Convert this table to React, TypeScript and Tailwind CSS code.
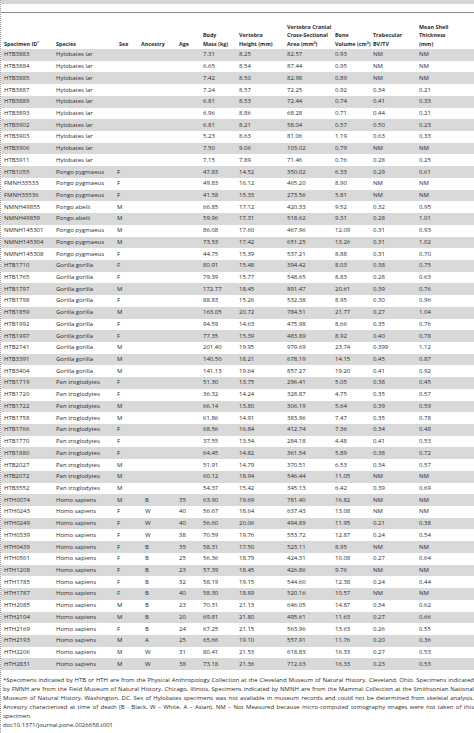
import React from 'react';

type Row = [string, string, string, string, string, string, string, string, string, string, string];

const rows: Row[] = [
  ['HTB3883', 'Hylobates lar', '', '', '', '7.31', '8.25', '82.57', '0.93', 'NM', 'NM'],
  ['HTB3884', 'Hylobates lar', '', '', '', '6.65', '8.54', '87.44', '0.95', 'NM', 'NM'],
  ['HTB3885', 'Hylobates lar', '', '', '', '7.42', '8.50', '82.98', '0.89', 'NM', 'NM'],
  ['HTB3887', 'Hylobates lar', '', '', '', '7.24', '8.57', '72.25', '0.92', '0.34', '0.21'],
  ['HTB3889', 'Hylobates lar', '', '', '', '6.81', '8.53', '72.44', '0.74', '0.41', '0.33'],
  ['HTB3893', 'Hylobates lar', '', '', '', '6.96', '8.86', '68.28', '0.71', '0.44', '0.21'],
  ['HTB3902', 'Hylobates lar', '', '', '', '6.81', '8.21', '58.04', '0.57', '0.50', '0.23'],
  ['HTB3903', 'Hylobates lar', '', '', '', '5.23', '8.63', '81.06', '1.19', '0.63', '0.33'],
  ['HTB3906', 'Hylobates lar', '', '', '', '7.50', '9.06', '103.02', '0.79', 'NM', 'NM'],
  ['HTB3911', 'Hylobates lar', '', '', '', '7.15', '7.89', '71.46', '0.76', '0.28', '0.25'],
  ['HTB1055', 'Pongo pygmaeus', 'F', '', '', '47.83', '14.52', '350.02', '6.33', '0.29', '0.61'],
  ['FMNH33533', 'Pongo pygmaeus', 'F', '', '', '49.83', '16.12', '465.20', '8.90', 'NM', 'NM'],
  ['FMNH33536', 'Pongo pygmaeus', 'F', '', '', '41.58', '15.33', '273.56', '5.81', 'NM', 'NM'],
  ['NMNH49855', 'Pongo abelii', 'M', '', '', '66.85', '17.12', '420.33', '9.52', '0.32', '0.95'],
  ['NMNH49859', 'Pongo abelii', 'M', '', '', '59.96', '17.31', '518.62', '9.31', '0.28', '1.01'],
  ['NMNH145301', 'Pongo pygmaeus', 'M', '', '', '86.08', '17.60', '467.96', '12.09', '0.31', '0.93'],
  ['NMNH145304', 'Pongo pygmaeus', 'M', '', '', '73.53', '17.42', '651.25', '13.26', '0.31', '1.02'],
  ['NMNH145308', 'Pongo pygmaeus', 'F', '', '', '44.75', '15.39', '537.21', '8.88', '0.31', '0.70'],
  ['HTB1710', 'Gorilla gorilla', 'F', '', '', '80.91', '15.48', '394.42', '8.03', '0.38', '0.75'],
  ['HTB1765', 'Gorilla gorilla', 'F', '', '', '79.39', '15.77', '548.65', '8.83', '0.28', '0.63'],
  ['HTB1797', 'Gorilla gorilla', 'M', '', '', '172.77', '18.45', '891.47', '20.61', '0.39', '0.76'],
  ['HTB1798', 'Gorilla gorilla', 'F', '', '', '88.83', '15.26', '532.38', '8.95', '0.30', '0.96'],
  ['HTB1859', 'Gorilla gorilla', 'M', '', '', '163.05', '20.72', '784.51', '21.77', '0.27', '1.04'],
  ['HTB1992', 'Gorilla gorilla', 'F', '', '', '94.59', '14.63', '475.98', '8.66', '0.35', '0.76'],
  ['HTB1997', 'Gorilla gorilla', 'F', '', '', '77.35', '15.39', '483.89', '8.92', '0.40', '0.78'],
  ['HTB2741', 'Gorilla gorilla', 'M', '', '', '201.40', '19.95', '979.69', '23.74', '0.399', '1.12'],
  ['HTB3391', 'Gorilla gorilla', 'M', '', '', '140.50', '18.21', '678.19', '14.15', '0.45', '0.87'],
  ['HTB3404', 'Gorilla gorilla', 'M', '', '', '141.13', '19.64', '857.27', '19.20', '0.41', '0.92'],
  ['HTB1719', 'Pan troglodytes', 'F', '', '', '51.30', '13.75', '296.41', '5.05', '0.38', '0.45'],
  ['HTB1720', 'Pan troglodytes', 'F', '', '', '36.32', '14.24', '328.87', '4.75', '0.35', '0.57'],
  ['HTB1722', 'Pan troglodytes', 'M', '', '', '66.14', '13.80', '306.19', '5.64', '0.39', '0.59'],
  ['HTB1758', 'Pan troglodytes', 'M', '', '', '61.86', '14.91', '383.96', '7.47', '0.35', '0.78'],
  ['HTB1766', 'Pan troglodytes', 'F', '', '', '68.56', '16.84', '412.74', '7.36', '0.34', '0.48'],
  ['HTB1770', 'Pan troglodytes', 'F', '', '', '37.55', '13.54', '284.18', '4.48', '0.41', '0.53'],
  ['HTB1880', 'Pan troglodytes', 'F', '', '', '64.45', '14.82', '361.54', '5.89', '0.38', '0.72'],
  ['HTB2027', 'Pan troglodytes', 'M', '', '', '51.91', '14.79', '370.51', '6.53', '0.34', '0.57'],
  ['HTB2072', 'Pan troglodytes', 'M', '', '', '60.12', '18.94', '546.44', '11.05', 'NM', 'NM'],
  ['HTB3552', 'Pan troglodytes', 'M', '', '', '54.37', '15.42', '345.13', '6.42', '0.39', '0.69'],
  ['HTH0074', 'Homo sapiens', 'M', 'B', '35', '63.90', '19.69', '781.40', '16.82', 'NM', 'NM'],
  ['HTH0243', 'Homo sapiens', 'F', 'W', '40', '56.67', '18.64', '637.43', '13.08', 'NM', 'NM'],
  ['HTH0249', 'Homo sapiens', 'F', 'W', '40', '56.60', '20.06', '494.89', '11.95', '0.21', '0.38'],
  ['HTH0339', 'Homo sapiens', 'F', 'W', '38', '70.59', '19.76', '553.72', '12.87', '0.24', '0.54'],
  ['HTH0439', 'Homo sapiens', 'F', 'B', '35', '58.31', '17.50', '523.11', '8.95', 'NM', 'NM'],
  ['HTH0561', 'Homo sapiens', 'F', 'B', '25', '56.36', '18.79', '424.31', '10.08', '0.27', '0.64'],
  ['HTH1208', 'Homo sapiens', 'F', 'B', '23', '57.39', '18.45', '426.86', '9.76', 'NM', 'NM'],
  ['HTH1785', 'Homo sapiens', 'F', 'B', '32', '58.19', '19.15', '544.60', '12.38', '0.24', '0.44'],
  ['HTH1787', 'Homo sapiens', 'F', 'B', '40', '58.30', '18.89', '520.16', '10.57', 'NM', 'NM'],
  ['HTH2085', 'Homo sapiens', 'M', 'B', '23', '70.31', '21.13', '646.05', '14.87', '0.34', '0.62'],
  ['HTH2104', 'Homo sapiens', 'M', 'B', '20', '69.81', '21.80', '495.61', '11.63', '0.27', '0.66'],
  ['HTH2169', 'Homo sapiens', 'F', 'B', '24', '67.25', '21.15', '563.96', '13.63', '0.26', '0.55'],
  ['HTH2193', 'Homo sapiens', 'M', 'A', '25', '65.66', '19.10', '557.91', '11.76', '0.20', '0.36'],
  ['HTH2206', 'Homo sapiens', 'M', 'W', '31', '80.41', '21.53', '618.83', '16.33', '0.27', '0.53'],
  ['HTH2831', 'Homo sapiens', 'M', 'W', '38', '73.18', '21.36', '712.03', '16.33', '0.23', '0.53'],
];

// column template shared by header and body
const cols = 'grid grid-cols-[52px_61px_24px_38px_24px_36px_48px_48px_38px_46px_1fr]';

export default function App() {
  return (
    <div
      className="w-[474px] h-[733px] overflow-hidden bg-white text-[#2b2b2b] border-l border-dotted border-[#9a9a9a]"
      style={{ fontFamily: '"Open Sans", "Noto Sans", sans-serif' }}
    >
      {/* tail of the previous block */}
      <div className="h-[4px] bg-[#d6d6d6]" />
      <div className="h-[8px]" />
      <div className="border-t border-[#8c8c8c]" />

      {/* header */}
      <div
        className={`${cols} items-end h-[36px] pl-[3px] pb-[1px] text-[5.4px] leading-[8.3px] font-bold whitespace-nowrap`}
      >
        <div>
          Specimen ID<sup className="text-[3.5px]">*</sup>
        </div>
        <div>Species</div>
        <div className="pl-[2px]">Sex</div>
        <div>Ancestry</div>
        <div>Age</div>
        <div>
          Body
          <br />
          Mass (kg)
        </div>
        <div>
          Vertebra
          <br />
          Height (mm)
        </div>
        <div>
          Vertebra Cranial
          <br />
          Cross-Sectional
          <br />
          Area (mm<sup className="text-[3.5px]">2</sup>)
        </div>
        <div>
          Bone
          <br />
          Volume (cm<sup className="text-[3.5px]">3</sup>)
        </div>
        <div>
          Trabecular
          <br />
          BV/TV
        </div>
        <div>
          Mean Shell
          <br />
          Thickness
          <br />
          (mm)
        </div>
      </div>

      {/* body */}
      <div className="flex flex-col text-[6px] whitespace-nowrap">
        {rows.map((r, i) => (
          <div
            key={r[0]}
            className={`${cols} items-center h-[11.73px] pl-[3px] ${i % 2 === 0 ? 'bg-[#d9d9d9]' : 'bg-white'}`}
          >
            <div>{r[0]}</div>
            <div>{r[1]}</div>
            <div>{r[2]}</div>
            <div className="pl-[4px]">{r[3]}</div>
            <div>{r[4]}</div>
            <div>{r[5]}</div>
            <div>{r[6]}</div>
            <div>{r[7]}</div>
            <div>{r[8]}</div>
            <div>{r[9]}</div>
            <div>{r[10]}</div>
          </div>
        ))}
      </div>

      {/* footnote */}
      <div className="pt-[6px] pl-[2px] text-[6px] leading-[8.9px]">
        <p className="text-justify">
          *Specimens indicated by HTB or HTH are from the Physical Anthropology Collection at the Cleveland Museum of
          Natural History, Cleveland, Ohio. Specimens indicated by FMNH are from the Field Museum of Natural History,
          Chicago, Illinois. Specimens indicated by NMNH are from the Mammal Collection at the Smithsonian National
          Museum of Natural History, Washington, DC. Sex of Hylobates specimens was not available in museum records and
          could not be determined from skeletal analysis. Ancestry characterized at time of death (B - Black, W – White,
          A – Asian). NM – Not Measured because micro-computed tomography images were not taken of this specimen.
        </p>
        <p>doi:10.1371/journal.pone.0026658.t001</p>
      </div>
    </div>
  );
}
